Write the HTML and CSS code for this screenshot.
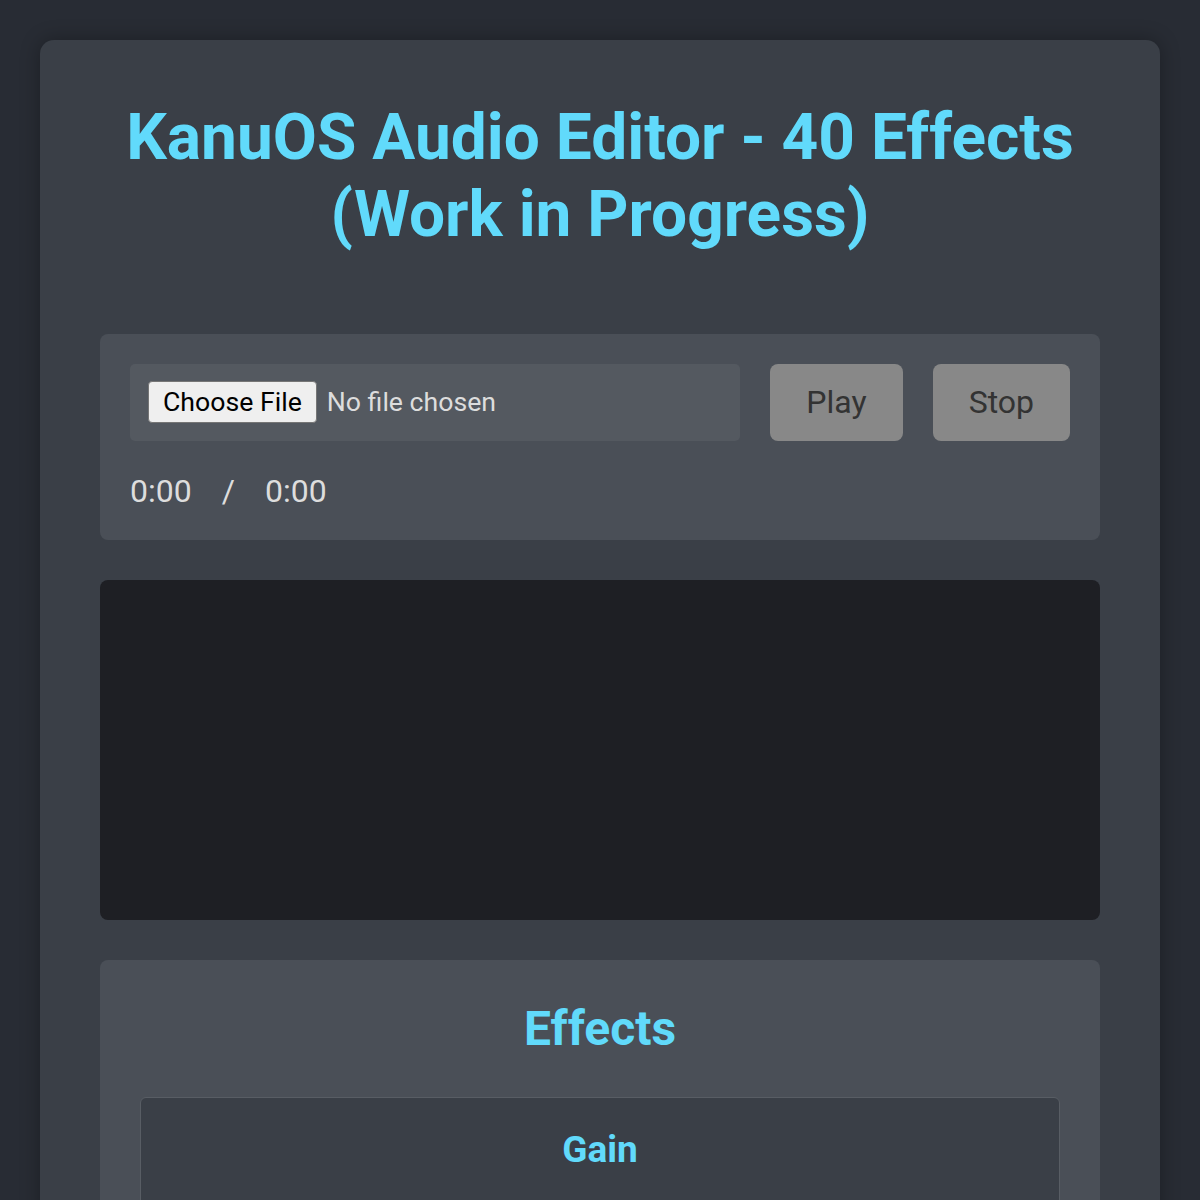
FILE: index.html
```html
<!DOCTYPE html>
<html lang="en">
<head>
    <meta charset="UTF-8">
    <meta name="viewport" content="width=device-width, initial-scale=1.0">
    <title>KanuOS Audio Editor</title>
    <link rel="stylesheet" href="styles.css">
</head>
<body>
    <div class="container">
        <h1>KanuOS Audio Editor - 40 Effects (Work in Progress)</h1>

        <div class="controls">
            <div class="controls-row">
                <input type="file" id="fileInput" class="file-input" accept="audio/*">
                <button class="btn" id="playBtn" disabled>Play</button>
                <button class="btn" id="stopBtn" disabled>Stop</button>
            </div>
            <div class="time">
                <span id="currentTime">0:00</span>
                <span class="sep">/</span>
                <span id="duration">0:00</span>
            </div>
        </div>

        <canvas class="waveform" id="waveform"></canvas>

        <div class="effects">
            <h2>Effects</h2>
            <div class="effect-card">
                <h3>Gain</h3>
            </div>
        </div>
    </div>
</body>
</html>
```

FILE: styles.css
```css
* {
    margin: 0;
    padding: 0;
    box-sizing: border-box;
}

body {
    font-family: Roboto, 'Noto Sans', sans-serif;
    background: #282c34;
    color: #ddd;
    padding: 40px;
    min-height: 100vh;
}

.container {
    background: #3a3f47;
    border-radius: 14px;
    padding: 60px;
    box-shadow: 0 0 20px rgba(0, 0, 0, 0.3);
}

h1 {
    color: #61dafb;
    font-size: 64px;
    font-weight: 700;
    line-height: 1.2;
    text-align: center;
    margin-bottom: 80px;
}

.controls {
    background: #4a4f57;
    border-radius: 8px;
    padding: 30px;
    margin-bottom: 40px;
}

.controls-row {
    display: flex;
    gap: 30px;
    align-items: stretch;
}

.file-input {
    flex: 1;
    min-width: 0;
    background: #545960;
    border-radius: 5px;
    padding: 17px 18px;
    font-family: Roboto, sans-serif;
    font-size: 26.67px;
    color: #ddd;
}

.file-input::file-selector-button {
    font-family: Roboto, sans-serif;
    font-size: 26.67px;
    color: #000;
    background: #efefef;
    border: 1px solid #767676;
    border-radius: 4px;
    padding: 4px 14px;
    margin-right: 10px;
}

.btn {
    background: #888;
    color: #333;
    border: none;
    border-radius: 8px;
    font-family: Roboto, sans-serif;
    font-size: 32px;
    padding: 0 36px;
    height: 77px;
}

.time {
    margin-top: 31px;
    font-size: 32px;
    color: #ddd;
    display: flex;
    gap: 30px;
}

.waveform {
    display: block;
    width: 100%;
    height: 340px;
    background: #1e1f24;
    border-radius: 8px;
    margin-bottom: 40px;
}

.effects {
    background: #4a4f57;
    border-radius: 8px;
    padding: 40px;
}

.effects h2 {
    color: #61dafb;
    font-size: 48px;
    font-weight: 700;
    text-align: center;
    margin-bottom: 40px;
}

.effect-card {
    background: #3a3f47;
    border: 1px solid #585d64;
    border-radius: 6px;
    padding: 30px;
    height: 300px;
}

.effect-card h3 {
    color: #61dafb;
    font-size: 37px;
    font-weight: 700;
    text-align: center;
}
```
